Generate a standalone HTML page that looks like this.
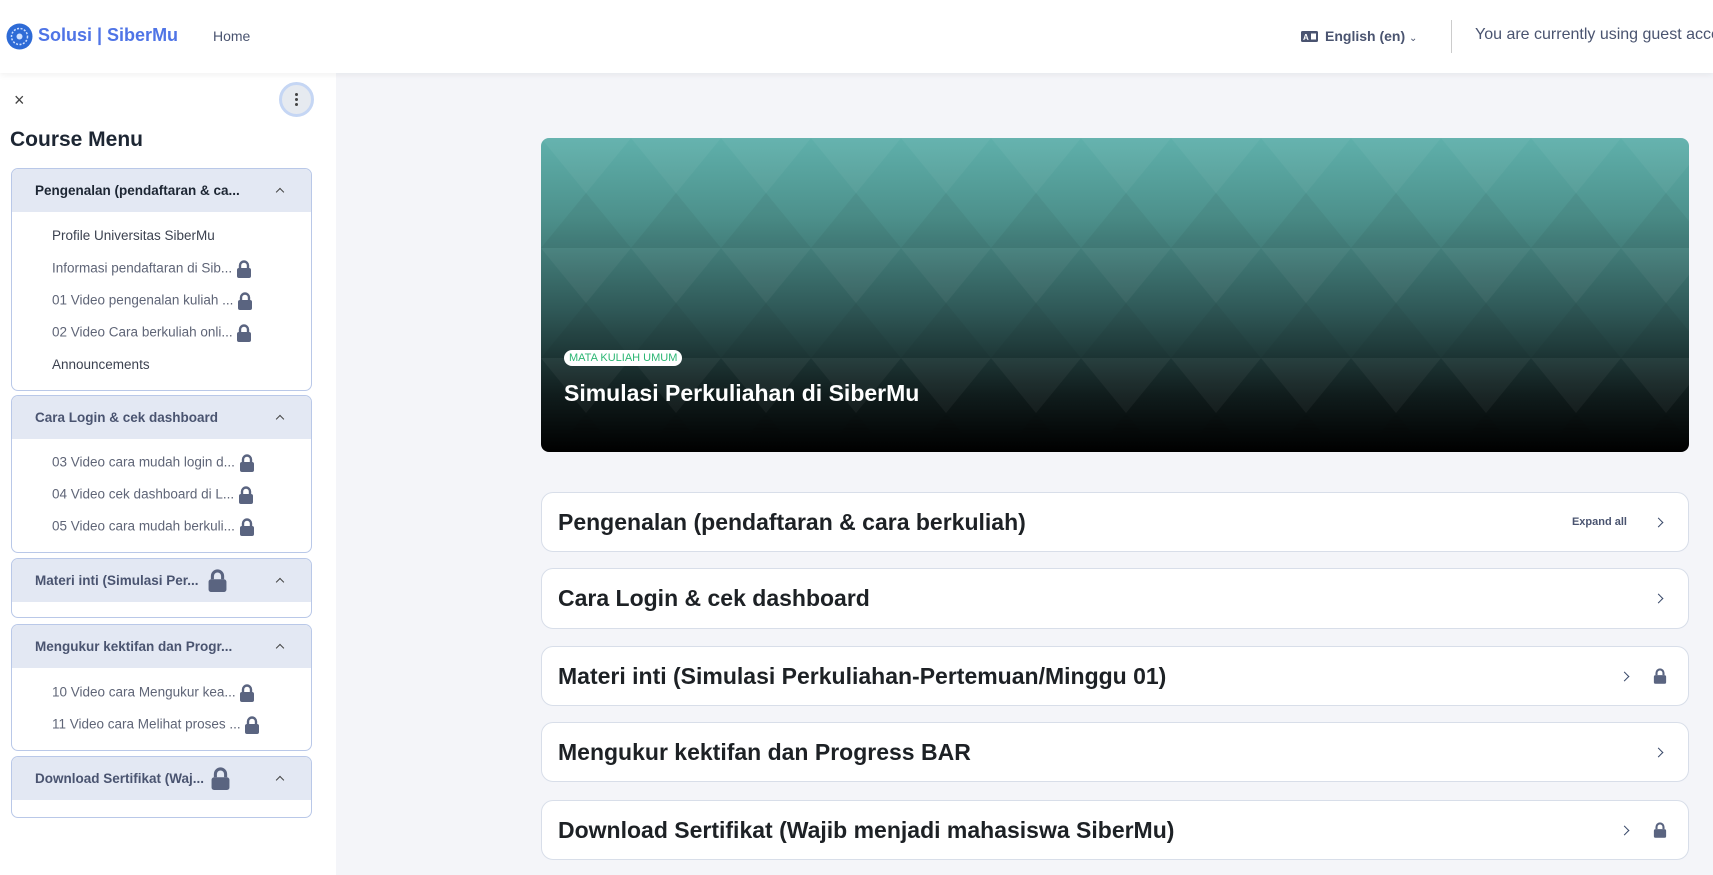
<!DOCTYPE html>
<html><head><meta charset="utf-8"><style>
*{box-sizing:border-box;margin:0;padding:0}
body{width:1713px;height:875px;overflow:hidden;font-family:"Liberation Sans",sans-serif;background:#f4f5f9;position:relative;color:#1d2125}
.hdr{position:absolute;left:0;top:0;width:1713px;height:73px;background:#fff;box-shadow:0 2px 6px rgba(0,0,0,.06);z-index:2}
.side{position:absolute;left:0;top:73px;width:336px;height:802px;background:#fff}
.box{position:absolute;left:11px;width:301px;border:1px solid #b9c8e8;border-radius:7px;overflow:hidden;background:#fff}
.bh{height:43px;background:#e3e8f3;display:flex;align-items:center;padding-left:23px;font-weight:bold;font-size:13.5px;color:#4a5470;position:relative}
.bh.dark{color:#1d2633}
.car{position:absolute;right:28px;top:20px;width:6px;height:6px;border-left:1.5px solid #444;border-top:1.5px solid #444;transform:rotate(45deg)}
.it{position:absolute;left:40px;font-size:13.5px;color:#5f6577;white-space:nowrap}
.lk{display:inline-block;vertical-align:middle}
.sec{position:absolute;left:541px;width:1148px;background:#fff;border:1px solid #d8dee9;border-radius:12px;font-weight:bold;font-size:23px;color:#1d2125;padding-left:16px;display:flex;align-items:center}
.chev{position:absolute;width:7px;height:7px;border-right:1.7px solid #3a4a6a;border-top:1.7px solid #3a4a6a;transform:rotate(45deg)}
</style></head><body>
<div class="hdr">
 <svg style="position:absolute;left:6px;top:23px" width="27" height="27" viewBox="0 0 27 27"><circle cx="13.5" cy="13.5" r="13" fill="#2e6bd6"/><circle cx="13.5" cy="13.5" r="8" fill="none" stroke="#cfe0ff" stroke-width="1.5" stroke-dasharray="2 1.5"/><circle cx="13.5" cy="13.5" r="3" fill="#cfe0ff"/></svg>
 <div style="position:absolute;left:38px;top:25px;font-size:18px;font-weight:bold;color:#4f74e6">Solusi | SiberMu</div>
 <div style="position:absolute;left:213px;top:28px;font-size:14px;color:#4a5470">Home</div>
 <svg style="position:absolute;left:1301px;top:31px" width="17" height="11"><rect width="17" height="11" rx="1.5" fill="#4a5470"/><text x="2" y="9" font-size="8" fill="#fff" font-family="Liberation Sans" font-weight="bold">A</text><rect x="10" y="2.5" width="5" height="6" fill="#fff"/></svg>
 <div style="position:absolute;left:1325px;top:28px;font-size:14px;font-weight:bold;color:#4a5470">English (en) <span style="font-size:10px;font-weight:normal">&#8964;</span></div>
 <div style="position:absolute;left:1451px;top:20px;width:1px;height:33px;background:#ccc"></div>
 <div style="position:absolute;left:1475px;top:26px;font-size:16px;color:#4a5470;white-space:nowrap">You are currently using guest access</div>
</div>
<div class="side">
 <div style="position:absolute;left:14px;top:17px;font-size:18px;color:#444">×</div>
 <div style="position:absolute;left:279px;top:9px;width:35px;height:35px;border-radius:50%;border:3px solid #c5d6f4;background:#e6eaf0">
  <div style="position:absolute;left:13px;top:8px;width:3px;height:3px;border-radius:50%;background:#444"></div>
  <div style="position:absolute;left:13px;top:13px;width:3px;height:3px;border-radius:50%;background:#444"></div>
  <div style="position:absolute;left:13px;top:18px;width:3px;height:3px;border-radius:50%;background:#444"></div>
 </div>
 <div style="position:absolute;left:10px;top:55px;font-size:21px;font-weight:bold;color:#1d2633">Course Menu</div>
</div>
<svg width="0" height="0" style="position:absolute"><defs><symbol id="lock" viewBox="0 0 16 18"><path d="M4 8V5.5a4 4 0 0 1 8 0V8" fill="none" stroke="#5a6480" stroke-width="2.4"/><rect x="1" y="8" width="14" height="10" rx="2" fill="#5a6480"/></symbol></defs></svg>
<div class="box" style="top:168px;height:223px"><div class="bh dark">Pengenalan (pendaftaran &amp; ca...<span class="car"></span></div>
 <div class="it" style="top:59px;color:#3c4250">Profile Universitas SiberMu</div>
 <div class="it" style="top:91px">Informasi pendaftaran di Sib... <svg class="lk" width="16" height="18"><use href="#lock"/></svg></div>
 <div class="it" style="top:123px">01 Video pengenalan kuliah ... <svg class="lk" width="16" height="18"><use href="#lock"/></svg></div>
 <div class="it" style="top:155px">02 Video Cara berkuliah onli... <svg class="lk" width="16" height="18"><use href="#lock"/></svg></div>
 <div class="it" style="top:188px;color:#3c4250">Announcements</div>
</div>
<div class="box" style="top:395px;height:158px"><div class="bh">Cara Login &amp; cek dashboard<span class="car"></span></div>
 <div class="it" style="top:58px">03 Video cara mudah login d... <svg class="lk" width="16" height="18"><use href="#lock"/></svg></div>
 <div class="it" style="top:90px">04 Video cek dashboard di L... <svg class="lk" width="16" height="18"><use href="#lock"/></svg></div>
 <div class="it" style="top:122px">05 Video cara mudah berkuli... <svg class="lk" width="16" height="18"><use href="#lock"/></svg></div>
</div>
<div class="box" style="top:558px;height:60px"><div class="bh">Materi inti (Simulasi Per... <svg style="margin-left:8px" width="21" height="23" viewBox="0 0 16 18"><use href="#lock"/></svg><span class="car"></span></div></div>
<div class="box" style="top:624px;height:127px"><div class="bh">Mengukur kektifan dan Progr...<span class="car"></span></div>
 <div class="it" style="top:59px">10 Video cara Mengukur kea... <svg class="lk" width="16" height="18"><use href="#lock"/></svg></div>
 <div class="it" style="top:91px">11 Video cara Melihat proses ... <svg class="lk" width="16" height="18"><use href="#lock"/></svg></div>
</div>
<div class="box" style="top:756px;height:62px"><div class="bh">Download Sertifikat (Waj... <svg style="margin-left:6px" width="21" height="23" viewBox="0 0 16 18"><use href="#lock"/></svg><span class="car"></span></div></div>

<div style="position:absolute;left:541px;top:138px;width:1148px;height:314px;border-radius:8px;overflow:hidden;background:linear-gradient(#5fb0ab 0%,#4d918c 25%,#2f5857 55%,#101c1c 82%,#000 100%)">
 <svg width="1148" height="314" style="position:absolute;left:0;top:0"><defs><pattern id="tp" width="90" height="110" patternUnits="userSpaceOnUse"><polygon points="0,0 45,55 90,0" fill="rgba(255,255,255,.045)"/><polygon points="45,55 0,110 90,110" fill="rgba(0,0,0,.05)"/></pattern></defs><rect width="1148" height="314" fill="url(#tp)"/></svg>
 <div style="position:absolute;left:23px;top:212px;background:#fff;border-radius:10px;padding:2px 5px;font-size:11px;color:#2bb673">MATA KULIAH UMUM</div>
 <div style="position:absolute;left:23px;top:242px;font-size:23px;font-weight:bold;color:#fff">Simulasi Perkuliahan di SiberMu</div>
</div>
<div class="sec" style="top:492px;height:60px">Pengenalan (pendaftaran &amp; cara berkuliah)<span style="position:absolute;right:61px;font-size:11px;color:#4a5470">Expand all</span><span class="chev" style="right:26px"></span></div>
<div class="sec" style="top:568px;height:61px">Cara Login &amp; cek dashboard<span class="chev" style="right:26px"></span></div>
<div class="sec" style="top:646px;height:60px">Materi inti (Simulasi Perkuliahan-Pertemuan/Minggu 01)<span class="chev" style="right:60px"></span><svg style="position:absolute;right:21px" width="14" height="16" viewBox="0 0 16 18"><use href="#lock"/></svg></div>
<div class="sec" style="top:722px;height:60px">Mengukur kektifan dan Progress BAR<span class="chev" style="right:26px"></span></div>
<div class="sec" style="top:800px;height:60px">Download Sertifikat (Wajib menjadi mahasiswa SiberMu)<span class="chev" style="right:60px"></span><svg style="position:absolute;right:21px" width="14" height="16" viewBox="0 0 16 18"><use href="#lock"/></svg></div>
</body></html>
